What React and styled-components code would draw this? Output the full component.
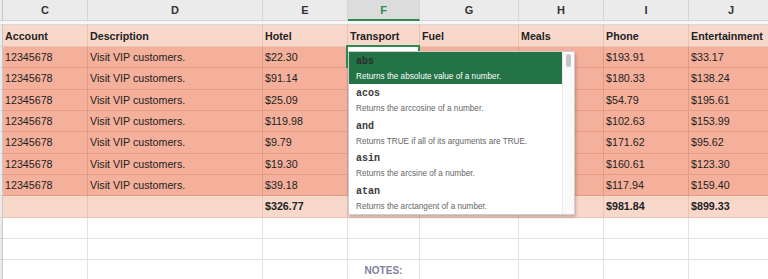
import styled, { createGlobalStyle } from "styled-components";

const GlobalStyle = createGlobalStyle`
  html, body {
    margin: 0;
    padding: 0;
    background: #ffffff;
    overflow: hidden;
  }
  body {
    font-family: "Liberation Sans", Arial, sans-serif;
  }
`;

const widths = [3, 85, 175, 85, 72, 99, 85, 85, 85];
const letters = ["", "C", "D", "E", "F", "G", "H", "I", "J"];
const gridCols = widths.map((w) => `${w}px`).join(" ");

const tones = {
  head: { bg: "#f9d8cc", line: "#ecc2b4" },
  data: { bg: "#f4b09b", line: "#e09a85" },
  total: { bg: "#f9d8cc", line: "#ecc2b4" },
  empty: { bg: "#ffffff", line: "#e2e2e2" },
};

// F, G and H sit under the formula popup, so they are left blank here
const rows = [
  ["12345678", "Visit VIP customers.", "$22.30", "", "", "", "$193.91", "$33.17"],
  ["12345678", "Visit VIP customers.", "$91.14", "", "", "", "$180.33", "$138.24"],
  ["12345678", "Visit VIP customers.", "$25.09", "", "", "", "$54.79", "$195.61"],
  ["12345678", "Visit VIP customers.", "$119.98", "", "", "", "$102.63", "$153.99"],
  ["12345678", "Visit VIP customers.", "$9.79", "", "", "", "$171.62", "$95.62"],
  ["12345678", "Visit VIP customers.", "$19.30", "", "", "", "$160.61", "$123.30"],
  ["12345678", "Visit VIP customers.", "$39.18", "", "", "", "$117.94", "$159.40"],
];

const functions = [
  ["abs", "Returns the absolute value of a number."],
  ["acos", "Returns the arccosine of a number."],
  ["and", "Returns TRUE if all of its arguments are TRUE."],
  ["asin", "Returns the arcsine of a number."],
  ["atan", "Returns the arctangent of a number."],
];

const Sheet = styled.div`
  position: relative;
  width: 768px;
  height: 279px;
  overflow: hidden;
  font-size: 10.7px;
  color: #222;
`;

const HeaderRow = styled.div`
  display: grid;
  grid-template-columns: ${gridCols};
  height: 21px;
  background: #ebebeb;
`;

const ColLetter = styled.div`
  box-sizing: border-box;
  display: flex;
  align-items: center;
  justify-content: center;
  border-right: 1px solid #d4d4d4;
  border-bottom: ${(p) => (p.$active ? "2px solid #2f8a4e" : "1px solid #d4d4d4")};
  background: ${(p) => (p.$active ? "#dcdcdc" : "transparent")};
  color: ${(p) => (p.$active ? "#2f8a4e" : "#333")};
  font-size: 11px;
  font-weight: bold;
`;

const FreezeBar = styled.div`
  height: 3px;
  background: #f6f6f6;
  border-bottom: 1px solid #d9d9d9;
`;

const Row = styled.div`
  display: grid;
  grid-template-columns: ${gridCols};
  height: ${(p) => p.$h || 21.33}px;
  background: ${(p) => tones[p.$tone].bg};
`;

const Cell = styled.div`
  box-sizing: border-box;
  display: flex;
  align-items: center;
  padding: 0 2px;
  white-space: nowrap;
  overflow: hidden;
  border-right: 1px solid ${(p) => p.$line};
  border-bottom: 1px solid ${(p) => p.$line};
  font-weight: ${(p) => (p.$bold ? "bold" : "normal")};
`;

const Stub = styled.div`
  box-sizing: border-box;
  background: #ebebeb;
  border-right: 1px solid #c8c8c8;
  border-bottom: 1px solid #d4d4d4;
`;

const ActiveCell = styled.div`
  box-sizing: border-box;
  position: absolute;
  left: 346px;
  top: 45px;
  width: 74px;
  height: 23px;
  background: #fff;
  border: 2px solid #2f8a4e;
`;

const Notes = styled.div`
  box-sizing: border-box;
  display: flex;
  align-items: center;
  justify-content: center;
  border-right: 1px solid #e2e2e2;
  color: #8080a0;
  font-size: 10px;
  font-weight: bold;
`;

const Dropdown = styled.div`
  position: absolute;
  left: 348px;
  top: 51px;
  width: 227px;
  height: 164px;
  display: flex;
  background: #fff;
  border: 1px solid #cfcfcf;
  box-shadow: 1px 2px 3px rgba(0, 0, 0, 0.22);
  box-sizing: border-box;
`;

const List = styled.div`
  flex: 1;
  display: flex;
  flex-direction: column;
`;

const Item = styled.div`
  height: 32.6px;
  box-sizing: border-box;
  padding: 3px 0 0 7px;
  display: flex;
  flex-direction: column;
  gap: 3px;
  background: ${(p) => (p.$selected ? "#237346" : "transparent")};
`;

const FnName = styled.div`
  font-family: "Liberation Mono", "Courier New", monospace;
  font-weight: bold;
  font-size: 10px;
  line-height: 13px;
  color: ${(p) => (p.$selected ? "#2b2b2b" : "#3a3a3a")};
`;

const FnDesc = styled.div`
  font-size: 8.2px;
  line-height: 12px;
  color: ${(p) => (p.$selected ? "#ffffff" : "#666")};
`;

const ScrollTrack = styled.div`
  width: 12px;
  border-left: 1px solid #ececec;
  background: #fafafa;
  display: flex;
  justify-content: center;
  padding-top: 2px;
  box-sizing: border-box;
`;

const Thumb = styled.div`
  width: 5px;
  height: 13px;
  border-radius: 3px;
  background: #c4c4c4;
`;

const SheetRow = ({ tone, cells, bold, h }) => {
  const line = tones[tone].line;
  return (
    <Row $tone={tone} $h={h}>
      <Stub />
      {cells.map((c, i) => (
        <Cell key={i} $line={line} $bold={bold}>
          {c}
        </Cell>
      ))}
    </Row>
  );
};

const blank = ["", "", "", "", "", "", "", ""];

export default function App() {
  return (
    <Sheet>
      <GlobalStyle />
      <HeaderRow>
        {letters.map((l, i) =>
          i === 0 ? <Stub key={i} /> : (
            <ColLetter key={i} $active={l === "F"}>
              {l}
            </ColLetter>
          )
        )}
      </HeaderRow>
      <FreezeBar />
      <SheetRow
        tone="head"
        h={22}
        bold
        cells={["Account", "Description", "Hotel", "Transport", "Fuel", "Meals", "Phone", "Entertainment"]}
      />
      {rows.map((r, i) => (
        <SheetRow key={i} tone="data" cells={r} />
      ))}
      <SheetRow tone="total" bold cells={["", "", "$326.77", "", "", "", "$981.84", "$899.33"]} />
      <SheetRow tone="empty" cells={blank} />
      <SheetRow tone="empty" cells={blank} />
      <Row $tone="empty">
        <Stub />
        <Cell $line="#e2e2e2" />
        <Cell $line="#e2e2e2" />
        <Cell $line="#e2e2e2" />
        <Notes>NOTES:</Notes>
        <Cell $line="#e2e2e2" />
        <Cell $line="#e2e2e2" />
        <Cell $line="#e2e2e2" />
        <Cell $line="#e2e2e2" />
      </Row>

      <ActiveCell />
      <Dropdown>
        <List>
          {functions.map(([name, desc], i) => (
            <Item key={name} $selected={i === 0}>
              <FnName $selected={i === 0}>{name}</FnName>
              <FnDesc $selected={i === 0}>{desc}</FnDesc>
            </Item>
          ))}
        </List>
        <ScrollTrack>
          <Thumb />
        </ScrollTrack>
      </Dropdown>
    </Sheet>
  );
}
